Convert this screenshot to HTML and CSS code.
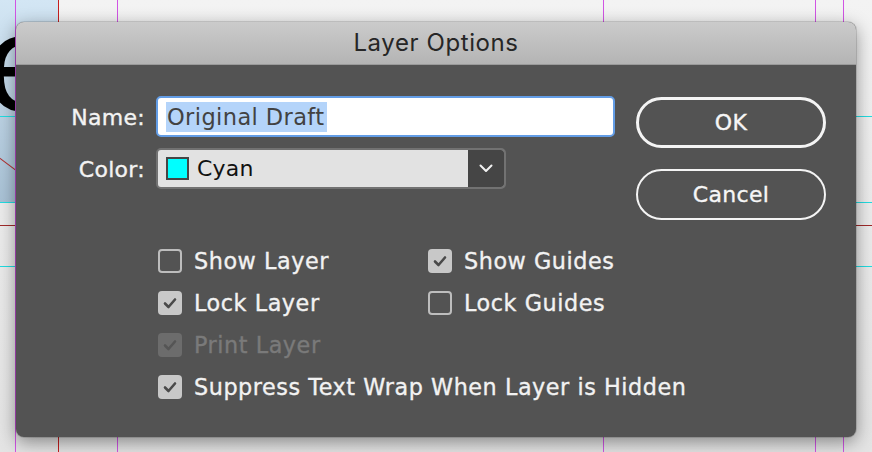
FILE: index.html
```html
<!DOCTYPE html>
<html lang="en">
<head>
<meta charset="utf-8">
<title>Layer Options</title>
<link rel="stylesheet" href="styles.css">
</head>
<body>
<div class="canvas">
  <div class="paste"></div>
  <div class="glyph" aria-hidden="true">e</div>
  <div class="guide h cyan g116"></div>
  <div class="guide h cyan g202"></div>
  <div class="guide h red g225"></div>
  <div class="guide h cyan g266"></div>
  <div class="guide diag"></div>
  <div class="guide v magenta x15"></div>
  <div class="guide v red x58"></div>
  <div class="guide v magenta x117"></div>
  <div class="guide v magenta x603"></div>
  <div class="guide v magenta x815"></div>
  <div class="guide v magenta x843"></div>

  <div class="dialog">
    <div class="titlebar">Layer Options</div>
    <div class="content">
      <div class="form">
        <div class="fields">
          <label class="label">Name:</label>
          <div class="input"><span class="sel">Original Draft</span></div>
          <label class="label">Color:</label>
          <div class="select">
            <span class="swatch"></span>
            <span class="value">Cyan</span>
            <span class="drop">
              <svg width="14" height="9" viewBox="0 0 14 9"><path d="M1.5 1.5 L7 7 L12.5 1.5" fill="none" stroke="#f2f2f2" stroke-width="2" stroke-linecap="round" stroke-linejoin="round"/></svg>
            </span>
          </div>
        </div>
        <div class="checks">
          <div class="check"><span class="box"></span><span>Show Layer</span></div>
          <div class="check"><span class="box on"><svg width="24" height="24" viewBox="0 0 24 24"><path d="M7 12.5 L10.5 16 L17 8.5" fill="none" stroke="#4a4a4a" stroke-width="2.6" stroke-linecap="round" stroke-linejoin="round"/></svg></span><span>Show Guides</span></div>
          <div class="check"><span class="box on"><svg width="24" height="24" viewBox="0 0 24 24"><path d="M7 12.5 L10.5 16 L17 8.5" fill="none" stroke="#4a4a4a" stroke-width="2.6" stroke-linecap="round" stroke-linejoin="round"/></svg></span><span>Lock Layer</span></div>
          <div class="check"><span class="box"></span><span>Lock Guides</span></div>
          <div class="check disabled"><span class="box on"><svg width="24" height="24" viewBox="0 0 24 24"><path d="M7 12.5 L10.5 16 L17 8.5" fill="none" stroke="#555555" stroke-width="2.6" stroke-linecap="round" stroke-linejoin="round"/></svg></span><span>Print Layer</span></div>
          <div class="check wide"><span class="box on"><svg width="24" height="24" viewBox="0 0 24 24"><path d="M7 12.5 L10.5 16 L17 8.5" fill="none" stroke="#4a4a4a" stroke-width="2.6" stroke-linecap="round" stroke-linejoin="round"/></svg></span><span>Suppress Text Wrap When Layer is Hidden</span></div>
        </div>
      </div>
      <div class="buttons">
        <button class="btn primary">OK</button>
        <button class="btn">Cancel</button>
      </div>
    </div>
  </div>
</div>
</body>
</html>
```
FILE: styles.css
```css
* { box-sizing: border-box; }
html, body { margin: 0; padding: 0; }
body { width: 872px; height: 452px; overflow: hidden; font-family: "DejaVu Sans", "Liberation Sans", sans-serif; }

.canvas {
  position: relative;
  width: 872px;
  height: 452px;
  overflow: hidden;
  background: linear-gradient(#f3f3f3, #e4e4e4);
  padding-top: 22px;
  padding-left: 16px;
}

.paste {
  position: absolute;
  left: 0; top: 0;
  width: 58px; height: 202px;
  background: linear-gradient(#d3e6f4, #a9c2d6);
}
.glyph {
  position: absolute;
  left: -15px; top: -7px;
  font-family: "Liberation Sans", sans-serif;
  font-size: 140px;
  line-height: 1;
  color: #000;
}

.guide { position: absolute; }
.guide.h { left: 0; width: 872px; height: 1px; }
.guide.v { top: 0; height: 452px; width: 1px; }
.cyan { background: #22dde2; }
.red { background: #c51f1f; }
.guide.h.red { background: #a02a2a; }
.magenta { background: #d154e4; }
.g116 { top: 116px; }
.g202 { top: 202px; }
.g225 { top: 225px; }
.g266 { top: 266px; }
.x15 { left: 15px; }
.x58 { left: 58px; }
.x117 { left: 117px; }
.x603 { left: 603px; }
.x815 { left: 815px; }
.x843 { left: 843px; }
.diag {
  left: -5px; top: 154px;
  width: 60px; height: 1px;
  background: #b23030;
  transform: rotate(36.87deg);
  transform-origin: 0 0;
}

.dialog {
  position: relative;
  z-index: 1;
  width: 840px;
  height: 415px;
  border-radius: 8px;
  background: #535353;
  box-shadow: 0 5px 18px rgba(0,0,0,0.42), 0 0 0 1px rgba(0,0,0,0.12);
  overflow: hidden;
  display: flex;
  flex-direction: column;
}

.titlebar {
  height: 43px;
  flex: none;
  border-bottom: 1px solid #9a9a9a;
  background: linear-gradient(#cbcbcb, #b4b4b4);
  display: flex;
  align-items: center;
  justify-content: center;
  font-family: "Inter", "Liberation Sans", sans-serif;
  font-size: 24px;
  letter-spacing: 0.6px;
  color: #262626;
  padding-bottom: 1px;
}

.content {
  display: flex;
  gap: 21px;
  padding-top: 31px;
}

.form { width: 599px; flex: none; }

.fields {
  display: grid;
  grid-template-columns: 129px 459px;
  grid-auto-rows: 41px;
  column-gap: 11px;
  row-gap: 11px;
  align-items: center;
}

.label {
  justify-self: end;
  color: #f3f3f3;
  font-size: 22px;
  letter-spacing: 0.3px;
  -webkit-text-stroke: 0.35px #f3f3f3;
  padding-top: 2px;
}

.input {
  height: 41px;
  border: 2px solid #639de6;
  border-radius: 5px;
  background: #fff;
  padding-left: 8px;
  display: flex;
  align-items: center;
  font-size: 22.5px;
  letter-spacing: 0.4px;
  color: #424242;
}
.sel {
  background: #b4d4fa;
  line-height: 30px;
  padding: 0 2px 0 1px;
}

.select {
  width: 350px;
  height: 41px;
  border: 2px solid #727272;
  border-radius: 5px;
  background: #e2e2e2;
  display: flex;
  align-items: center;
  padding-left: 8px;
  overflow: hidden;
}
.swatch {
  width: 23px; height: 23px;
  background: #00ffff;
  border: 2px solid #454545;
  flex: none;
}
.value {
  margin-left: 8px;
  font-size: 22px;
  color: #111;
  letter-spacing: 0.2px;
  flex: 1;
}
.drop {
  width: 36px;
  align-self: stretch;
  background: #454545;
  display: flex;
  align-items: center;
  justify-content: center;
}

.checks {
  margin-top: 51px;
  margin-left: 142px;
  display: grid;
  grid-template-columns: 270px auto;
  grid-auto-rows: 42px;
}
.check {
  display: flex;
  align-items: center;
  gap: 12px;
  color: #f2f2f2;
  font-size: 22.3px;
  letter-spacing: 0.55px;
  white-space: nowrap;
  -webkit-text-stroke: 0.35px currentColor;
}
.check.wide { grid-column: 1 / span 2; }
.box {
  width: 24px; height: 24px;
  flex: none;
  border: 2px solid #bdbdbd;
  border-radius: 4px;
  display: block;
}
.box.on {
  border: none;
  background: #c8c8c8;
}
.box svg { display: block; }
.check.disabled { color: #7a7a7a; }
.check.disabled .box.on { background: #6c6c6c; }

.buttons {
  display: flex;
  flex-direction: column;
  gap: 21px;
  padding-top: 1px;
}
.btn {
  width: 190px;
  height: 51px;
  border-radius: 26px;
  border: 2px solid #f4f4f4;
  background: transparent;
  color: #f6f6f6;
  font-family: "DejaVu Sans", sans-serif;
  font-size: 22px;
  letter-spacing: 0.3px;
  padding: 0;
  -webkit-text-stroke: 0.35px #f6f6f6;
}
.btn.primary { border-width: 3px; }
```
